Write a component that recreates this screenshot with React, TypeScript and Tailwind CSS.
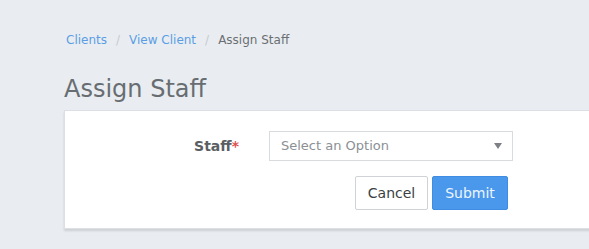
export default function App() {
  return (
    <div
      className="min-h-screen w-screen overflow-hidden bg-[#e9edf1] pl-16 pt-[32px]"
      style={{ fontFamily: '"DejaVu Sans", Verdana, sans-serif' }}
    >
      <nav className="flex items-center pl-[2px] text-[12px] leading-[16px]">
        <a className="text-[#5b9de4]">Clients</a>
        <span className="mx-[9px] text-[#c6cbd0]">/</span>
        <a className="text-[#5b9de4]">View Client</a>
        <span className="mx-[9px] text-[#c6cbd0]">/</span>
        <span className="text-[#6b6f73]">Assign Staff</span>
      </nav>

      <h1 className="mt-[27px] text-[24px] font-normal leading-[28px] text-[#686d72]">Assign Staff</h1>

      <div className="mt-[7px] w-[600px] border border-[#dcdfe3] bg-white pb-[18px] pt-[20px] shadow-[0_2px_2px_rgba(0,0,0,0.12)]">
        <div className="flex items-center">
          <label className="w-[174px] text-right text-[14px] font-bold text-[#5a5e62]">
            Staff<span className="text-[#e0504f]">*</span>
          </label>
          <div className="ml-[30px] flex h-[30px] w-[244px] items-center justify-between border border-[#d9dcdf] bg-white pl-[11px] pr-[10px]">
            <span className="text-[13px] text-[#8b9095]">Select an Option</span>
            <svg width="8" height="6" viewBox="0 0 8 6">
              <path d="M0 0 L8 0 L4 6 Z" fill="#7d8185" />
            </svg>
          </div>
        </div>
        <div className="ml-[290px] mt-[15px] flex gap-[4px]">
          <button className="h-[34px] w-[73px] rounded-[2px] border border-[#cfd3d7] bg-white text-[14px] text-[#3b3f43]">
            Cancel
          </button>
          <button className="h-[34px] w-[76px] rounded-[2px] border border-[#3f8ce3] bg-[#4a98ec] text-[14px] text-[#eef5fd]">
            Submit
          </button>
        </div>
      </div>
    </div>
  )
}
